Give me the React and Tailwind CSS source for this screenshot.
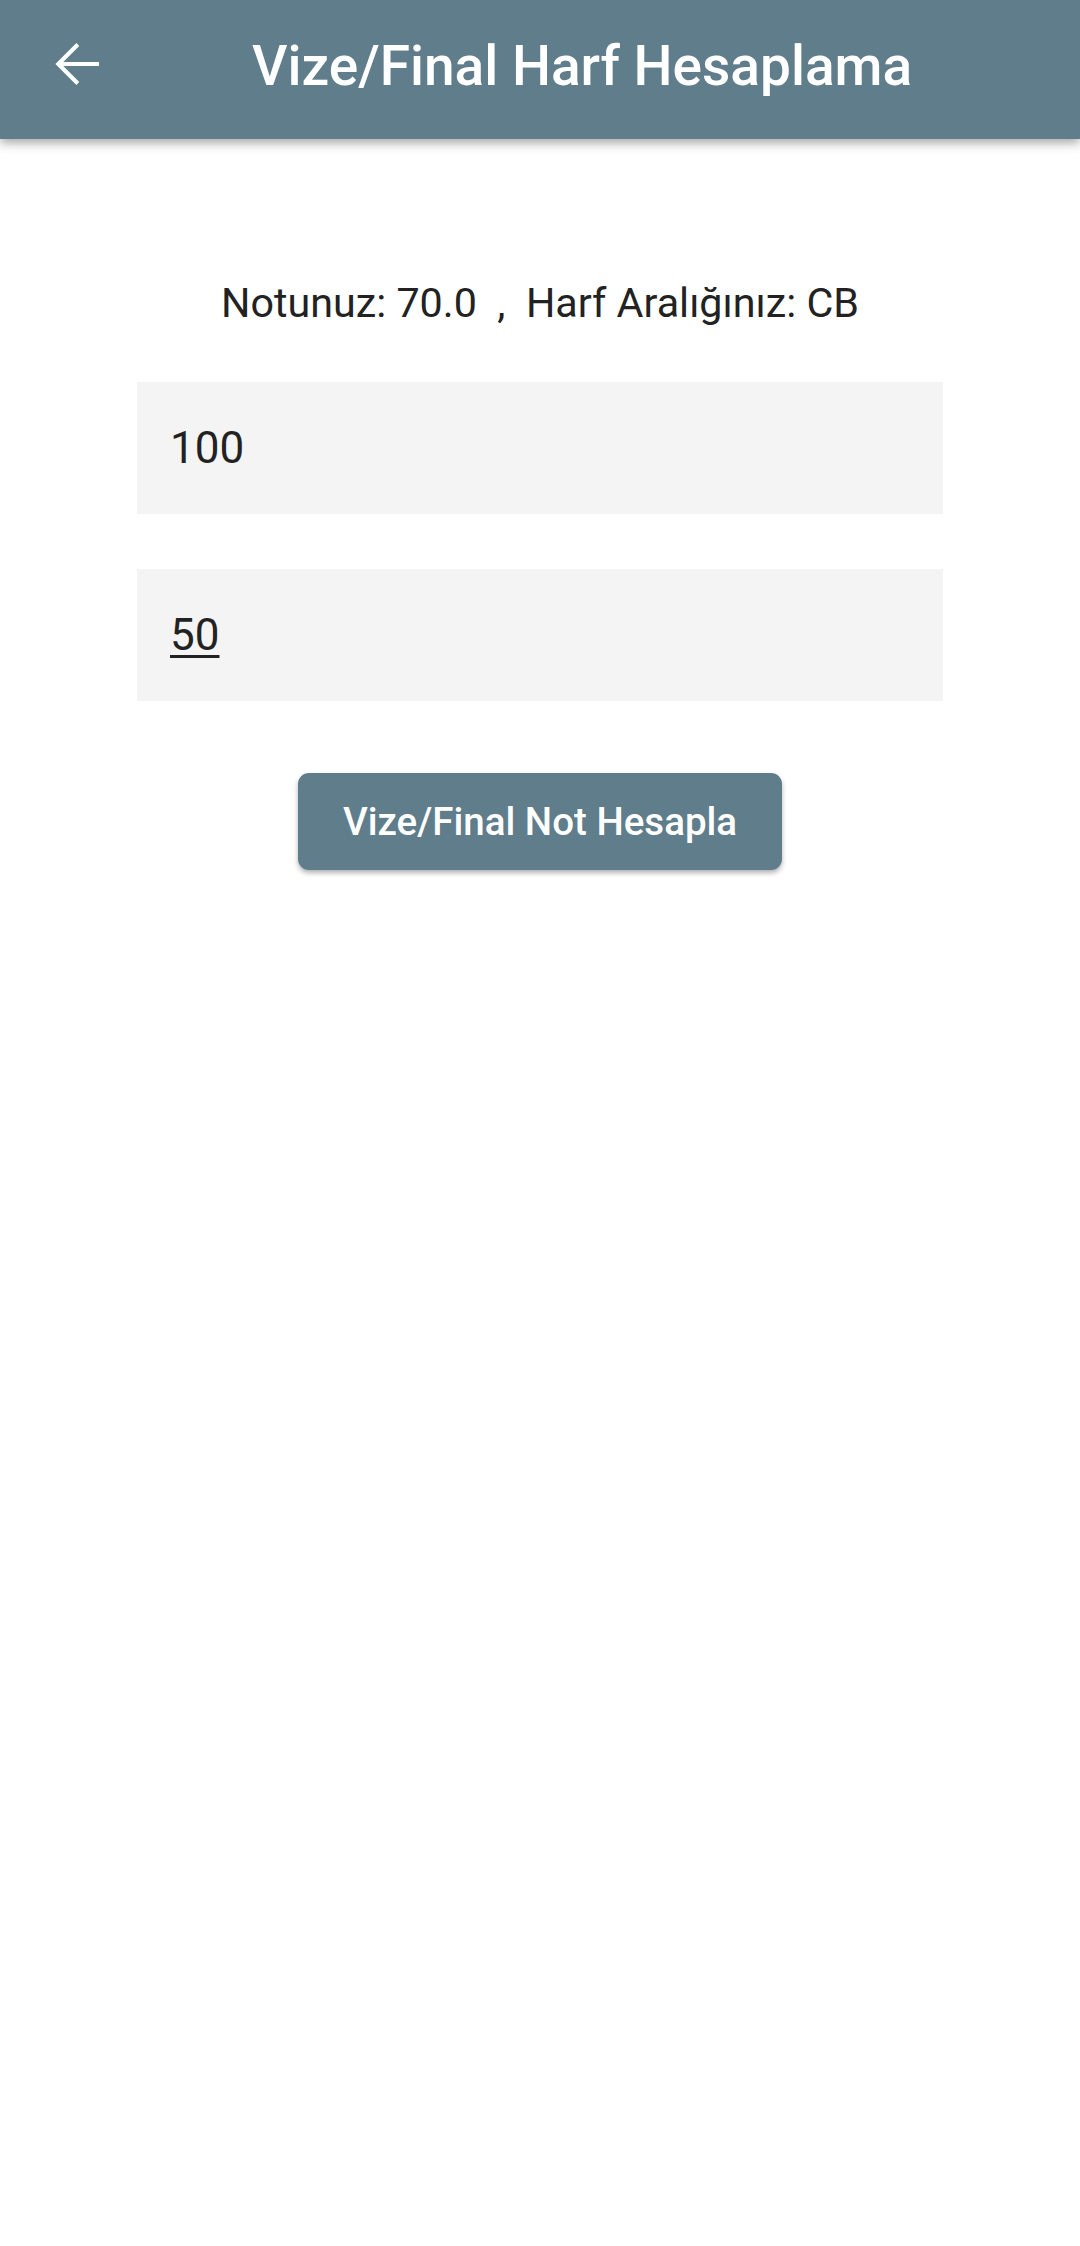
import React from "react";

export default function App() {
  return (
    <div className="w-[1080px] h-[2246px] bg-white font-['Roboto',sans-serif] text-[#222222]">
      <div className="relative z-10 h-[139px] bg-[#607d8b] flex items-center shadow-[0_4px_10px_rgba(0,0,0,0.35)]">
        <div className="ml-[44px] w-[66px] h-[66px] mb-[11px] flex items-center justify-center">
          <svg viewBox="0 0 24 24" className="w-[66px] h-[66px]" fill="none" stroke="#ffffff" strokeWidth="1.5" strokeLinejoin="miter">
            <path d="M5.2 12H20" />
            <path d="M12.3 4.9 5.2 12l7.1 7.1" />
          </svg>
        </div>
        <div className="ml-[142px] mb-[7px] text-[55px] leading-[64px] font-medium text-white whitespace-nowrap">
          Vize/Final Harf Hesaplama
        </div>
      </div>

      <div className="flex flex-col items-center">
        <div className="mt-[140px] text-[41.25px] leading-[48px] text-center whitespace-pre">
          {"Notunuz: 70.0  ,  Harf Aralığınız: CB"}
        </div>

        <div className="mt-[55px] w-[806px] h-[132px] bg-[#f4f4f4] flex items-center pl-[33px]">
          <span className="text-[44px] leading-[52px]">100</span>
        </div>

        <div className="mt-[55px] w-[806px] h-[132px] bg-[#f4f4f4] flex items-center pl-[33px]">
          <span className="text-[44px] leading-[52px] underline decoration-[3px] underline-offset-[5px]">50</span>
        </div>

        <div className="mt-[72px] w-[484px] h-[97px] rounded-[11px] bg-[#607d8b] flex items-center justify-center shadow-[0_3px_5px_rgba(0,0,0,0.3)]">
          <span className="text-[38.5px] leading-[45px] font-medium text-white whitespace-nowrap">
            Vize/Final Not Hesapla
          </span>
        </div>
      </div>
    </div>
  );
}
